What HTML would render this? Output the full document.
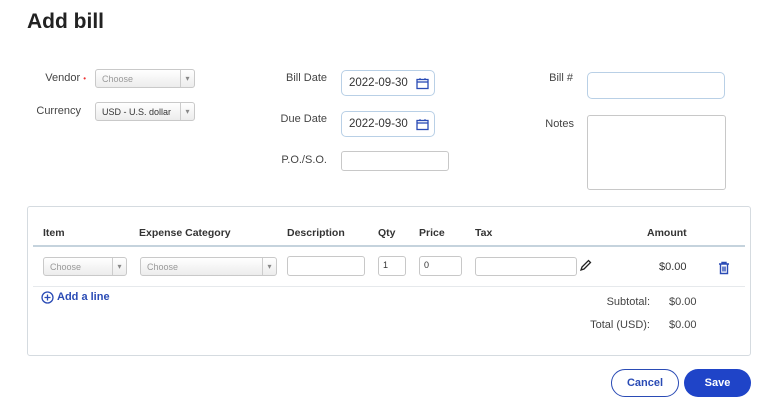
<!DOCTYPE html>
<html><head><style>
*{box-sizing:border-box;margin:0;padding:0}
body{width:768px;height:416px;background:#fff;font-family:"Liberation Sans",sans-serif;color:#333;position:relative;overflow:hidden}
.a{position:absolute}
.lbl{position:absolute;font-size:11px;color:#444;text-align:right}
.sel{position:absolute;border:1px solid #c9c9c9;border-radius:3px;background:linear-gradient(#fff,#ececec);font-size:9px;color:#999;padding:4px 6px;height:19px}
.sel:after{content:"▾";position:absolute;right:0;top:0;width:13px;height:17px;border-left:1px solid #ccc;font-size:8px;color:#888;text-align:center;line-height:17px}
.inp{position:absolute;border:1px solid #c8c8c8;border-radius:3px;background:#fff}
.dt{position:absolute;border:1px solid #b9d0e6;border-radius:5px;font-size:11.5px;color:#333;padding:6px 7px}
.th{position:absolute;top:227px;font-size:10.5px;font-weight:bold;color:#333}
</style></head><body>
<div class="a" style="left:27px;top:10px;font-size:21px;font-weight:bold;color:#222">Add bill</div>

<div class="lbl" style="left:20px;width:66px;top:72px">Vendor <span style="color:#e33;font-size:8px">•</span></div>
<div class="sel" style="left:95px;top:69px;width:100px">Choose</div>
<div class="lbl" style="left:20px;width:61px;top:105px">Currency</div>
<div class="sel" style="left:95px;top:102px;width:100px;color:#333">USD - U.S. dollar</div>

<div class="lbl" style="left:260px;width:67px;top:72px">Bill Date</div>
<div class="dt" style="left:341px;top:70px;width:94px;height:26px">2022-09-30</div>
<svg class="a" style="left:416px;top:77px" width="13" height="13" viewBox="0 0 13 13"><rect x="1" y="2.5" width="11" height="9" fill="none" stroke="#2a4bb5" stroke-width="1.3"/><line x1="1" y1="5" x2="12" y2="5" stroke="#2a4bb5" stroke-width="1.3"/><line x1="4" y1="1" x2="4" y2="3" stroke="#2a4bb5"/><line x1="9" y1="1" x2="9" y2="3" stroke="#2a4bb5"/></svg>
<div class="lbl" style="left:260px;width:67px;top:113px">Due Date</div>
<div class="dt" style="left:341px;top:111px;width:94px;height:26px">2022-09-30</div>
<svg class="a" style="left:416px;top:118px" width="13" height="13" viewBox="0 0 13 13"><rect x="1" y="2.5" width="11" height="9" fill="none" stroke="#2a4bb5" stroke-width="1.3"/><line x1="1" y1="5" x2="12" y2="5" stroke="#2a4bb5" stroke-width="1.3"/><line x1="4" y1="1" x2="4" y2="3" stroke="#2a4bb5"/><line x1="9" y1="1" x2="9" y2="3" stroke="#2a4bb5"/></svg>
<div class="lbl" style="left:260px;width:67px;top:154px">P.O./S.O.</div>
<div class="inp" style="left:341px;top:151px;width:108px;height:20px"></div>

<div class="lbl" style="left:520px;width:53px;top:72px">Bill #</div>
<div class="inp" style="left:587px;top:72px;width:138px;height:27px;border-color:#b9d0e6;border-radius:5px"></div>
<div class="lbl" style="left:520px;width:54px;top:118px">Notes</div>
<div class="inp" style="left:587px;top:115px;width:139px;height:75px"></div>

<div class="a" style="left:27px;top:206px;width:724px;height:150px;border:1px solid #d5dbe0;border-radius:3px"></div>
<div class="th" style="left:43px">Item</div>
<div class="th" style="left:139px">Expense Category</div>
<div class="th" style="left:287px">Description</div>
<div class="th" style="left:378px">Qty</div>
<div class="th" style="left:419px">Price</div>
<div class="th" style="left:475px">Tax</div>
<div class="th" style="left:647px">Amount</div>
<div class="a" style="left:33px;top:245px;width:712px;height:2px;background:#c5d3dd"></div>
<div class="sel" style="left:43px;top:257px;width:84px">Choose</div>
<div class="sel" style="left:140px;top:257px;width:137px">Choose</div>
<div class="inp" style="left:287px;top:256px;width:78px;height:20px"></div>
<div class="inp" style="left:378px;top:256px;width:28px;height:20px;font-size:9px;padding:3px 4px">1</div>
<div class="inp" style="left:419px;top:256px;width:43px;height:20px;font-size:9px;padding:3px 4px">0</div>
<div class="inp" style="left:475px;top:257px;width:102px;height:19px"></div>
<svg class="a" style="left:579px;top:259px" width="13" height="13" viewBox="0 0 13 13"><path d="M2 11 L3 8 L9.5 1.5 L11.5 3.5 L5 10 Z" fill="none" stroke="#222" stroke-width="1.3"/></svg>
<div class="a" style="left:659px;top:261px;font-size:11px;color:#333">$0.00</div>
<svg class="a" style="left:718px;top:261px" width="12" height="14" viewBox="0 0 12 14"><path d="M1 3h10M4 3V1.5h4V3M2.5 3v9.5h7V3M5 5.5v5M7 5.5v5" fill="none" stroke="#2a4bb5" stroke-width="1.4"/></svg>
<div class="a" style="left:33px;top:286px;width:712px;height:1px;background:#e6e9ec"></div>
<svg class="a" style="left:41px;top:291px" width="13" height="13" viewBox="0 0 13 13"><circle cx="6.5" cy="6.5" r="5.5" fill="none" stroke="#2a4bb5" stroke-width="1.3"/><path d="M6.5 3.5v6M3.5 6.5h6" stroke="#2a4bb5" stroke-width="1.3"/></svg>
<div class="a" style="left:57px;top:291px;font-size:11px;font-weight:bold;color:#2a4bb5">Add a line</div>
<div class="a" style="left:560px;width:90px;text-align:right;top:296px;font-size:11px;color:#444">Subtotal:</div>
<div class="a" style="left:669px;top:296px;font-size:11px;color:#444">$0.00</div>
<div class="a" style="left:560px;width:90px;text-align:right;top:319px;font-size:11px;color:#444">Total (USD):</div>
<div class="a" style="left:669px;top:319px;font-size:11px;color:#444">$0.00</div>

<div class="a" style="left:611px;top:369px;width:68px;height:28px;border:1px solid #2a4bb5;border-radius:14px;text-align:center;line-height:26px;font-size:11px;font-weight:bold;color:#2a4bb5">Cancel</div>
<div class="a" style="left:684px;top:369px;width:67px;height:28px;background:#1f44c8;border-radius:14px;text-align:center;line-height:28px;font-size:11px;font-weight:bold;color:#fff">Save</div>
</body></html>
